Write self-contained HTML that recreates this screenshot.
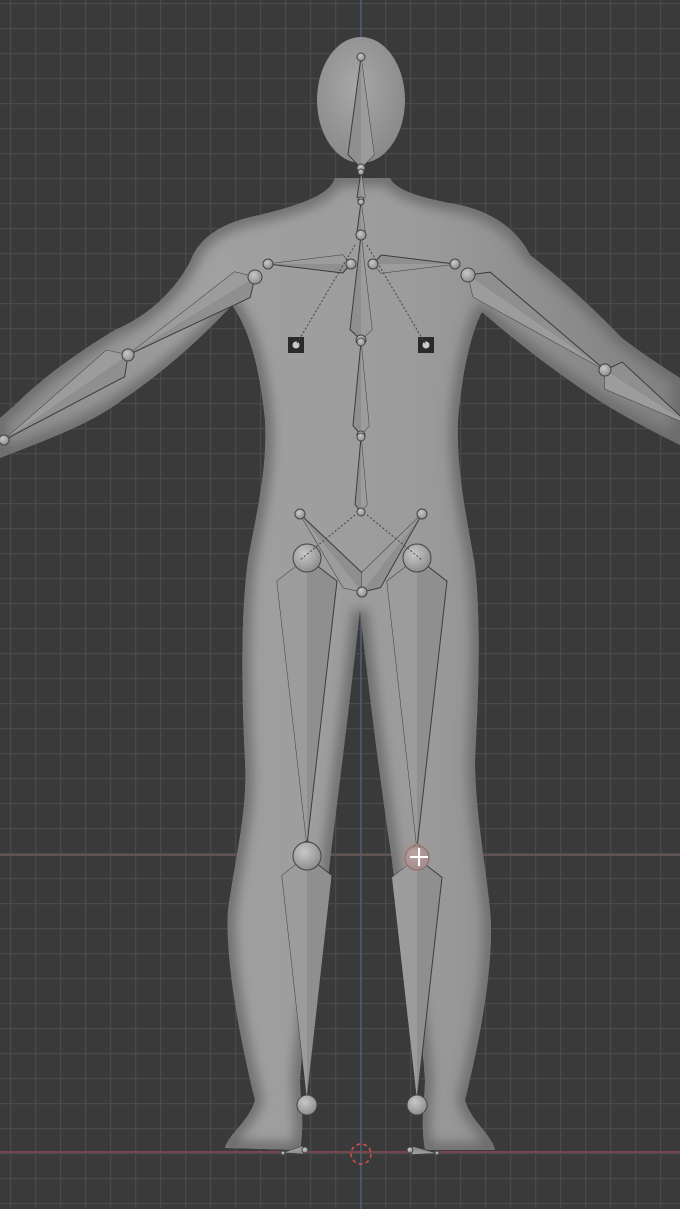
<!DOCTYPE html>
<html><head><meta charset="utf-8"><style>
html,body{margin:0;padding:0;background:#3b3b3b;width:680px;height:1209px;overflow:hidden}
svg{display:block}
</style></head><body>
<svg id="s" width="680" height="1209" viewBox="0 0 680 1209" xmlns="http://www.w3.org/2000/svg">
<defs>
<pattern id="g" x="10" y="3" width="25" height="25" patternUnits="userSpaceOnUse">
<rect width="25" height="25" fill="#3a3a3a"/>
<path d="M0 0.5H25M0.5 0V25" stroke="#4a4a4a" stroke-width="1.5"/>
</pattern>
<linearGradient id="bg" x1="0" x2="1" y1="0" y2="0">
<stop offset="0" stop-color="#8a8a8a"/><stop offset="0.3" stop-color="#a0a0a0"/><stop offset="0.6" stop-color="#9c9c9c"/><stop offset="1" stop-color="#808080"/>
</linearGradient>
<radialGradient id="sp" cx="0.4" cy="0.35" r="0.7"><stop offset="0" stop-color="#c8c8c8"/><stop offset="1" stop-color="#8a8a8a"/></radialGradient>
<radialGradient id="hd" cx="0.45" cy="0.4" r="0.6"><stop offset="0" stop-color="#a8a8a8"/><stop offset="1" stop-color="#8a8a8a"/></radialGradient>
<path id="body" d="M335,178 C330,195 300,205 260,215 C225,222 200,235 190,262 C175,290 150,315 115,330 C85,348 45,375 15,405 L0,418 L0,458 C40,442 90,425 122,400 C155,378 195,345 232,305 C250,330 260,370 265,420 C268,470 255,520 248,560 C240,620 242,700 245,760 C248,810 235,860 228,910 C225,960 240,1040 255,1100 C250,1120 228,1135 225,1148 L300,1150 C305,1120 300,1100 300,1080 C305,1000 325,920 330,860 C340,780 350,700 360,610 C370,700 380,780 392,860 C398,920 420,1000 425,1080 C425,1100 420,1120 425,1150 L495,1150 C492,1135 470,1120 465,1100 C480,1040 495,960 490,910 C485,860 475,810 475,760 C478,700 482,620 474,560 C467,520 456,470 458,420 C462,370 472,330 482,312 C520,345 560,375 598,400 C630,420 660,435 680,445 L680,378 C660,365 640,352 622,338 C590,305 560,278 530,255 C518,230 492,212 460,205 C420,198 395,190 390,178 Z"/>
<clipPath id="bc"><use href="#body"/></clipPath>
<filter id="bl"><feGaussianBlur stdDeviation="6"/></filter>
</defs>
<rect width="680" height="1209" fill="url(#g)"/>
<line x1="361" y1="0" x2="361" y2="1209" stroke="#4d5a78" stroke-width="1.5"/>
<line x1="0" y1="855" x2="680" y2="855" stroke="#6e5a5a" stroke-width="1.5"/>
<use href="#body" fill="url(#bg)"/>
<g clip-path="url(#bc)"><use href="#body" fill="none" stroke="#6a6a6a" stroke-width="14" filter="url(#bl)"/></g>
<ellipse cx="361" cy="100" rx="44" ry="63" fill="url(#hd)"/>
<line x1="0" y1="1152" x2="680" y2="1152" stroke="#8a4a52" stroke-width="1.5"/>
<g id="b" stroke-linejoin="round"></g>
<rect x="288" y="337" width="16" height="16" fill="#2a2a2a"/><circle cx="296" cy="345" r="3.5" fill="#ccc"/>
<rect x="418" y="337" width="16" height="16" fill="#2a2a2a"/><circle cx="426" cy="345" r="3.5" fill="#ccc"/>
<g fill="none" stroke="#444" stroke-dasharray="2,2" stroke-width="1">
<path d="M355,245 L296,345 M367,245 L426,345 M355,515 L300,560 M367,515 L422,560"/>
</g>
<circle cx="416" cy="857" r="14" fill="#b08a8a" opacity="0.6"/>
<path d="M419,848 v18 M410,857 h18" stroke="#fff" stroke-width="2"/>
<circle cx="361" cy="1154" r="10" fill="none" stroke="#d05050" stroke-width="1.5" stroke-dasharray="4,3"/>
</svg>
<script>
var g=document.getElementById('b'),ns='http://www.w3.org/2000/svg';
function el(t,a){var e=document.createElementNS(ns,t);for(var k in a)e.setAttribute(k,a[k]);g.appendChild(e);return e}
function bone(x1,y1,x2,y2,w,r1,r2,f){
 var dx=x2-x1,dy=y2-y1,L=Math.hypot(dx,dy),ux=dx/L,uy=dy/L,px=-uy,py=ux;f=f||0.1;
 var mx=x1+dx*f,my=y1+dy*f;
 el('polygon',{points:[x1,y1,mx+px*w,my+py*w,x2,y2,mx-px*w,my-py*w].join(','),fill:'#8f8f8f',stroke:'#3c3c3c','stroke-width':1});
 el('polygon',{points:[x1,y1,mx+px*w,my+py*w,x2,y2].join(','),fill:'#9c9c9c'});
 el('circle',{cx:x1,cy:y1,r:r1||4,fill:'url(#sp)',stroke:'#444','stroke-width':1});
 el('circle',{cx:x2,cy:y2,r:r2||4,fill:'url(#sp)',stroke:'#444','stroke-width':1});
}
bone(361,168,361,57,13,4,4,0.12);
bone(361,200,361,172,4,3,3);
bone(361,235,361,202,4,4,3);
bone(361,340,361,235,11,5,5);
bone(361,435,361,342,8,4,4);
bone(361,512,361,437,6,4,4);
bone(351,264,268,264,9,5,5);
bone(373,264,455,264,9,5,5);
bone(255,277,128,355,15,7,6);
bone(128,355,4,440,16,6,5);
bone(468,275,605,370,15,7,6);
bone(605,370,690,425,16,6,5);
bone(300,514,362,592,12,5,5,0.85);
bone(422,514,362,592,12,5,5,0.85);
bone(307,558,307,845,30,14,4,0.08);
bone(417,558,417,848,30,14,4,0.08);
bone(307,856,307,1100,25,14,4,0.08);
bone(417,858,417,1100,25,12,4,0.08);
el('circle',{cx:307,cy:1105,r:10,fill:'url(#sp)',stroke:'#444'});
el('circle',{cx:417,cy:1105,r:10,fill:'url(#sp)',stroke:'#444'});
bone(305,1150,283,1153,4,3,2);
bone(410,1150,437,1153,4,3,2);
</script>
</body></html>
